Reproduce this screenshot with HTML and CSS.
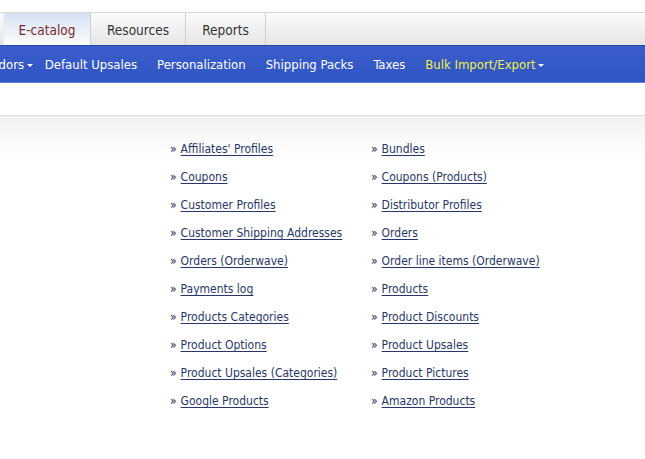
FILE: index.html
```html
<!DOCTYPE html>
<html>
<head>
<meta charset="utf-8">
<link rel="stylesheet" href="styles.css">
</head>
<body>
<div class="page">
  <div class="topspace"></div>
  <div class="tabs">
    <a class="tab active">E-catalog</a>
    <a class="tab">Resources</a>
    <a class="tab">Reports</a>
  </div>
  <div class="subnav">
    <div class="subnav-inner">
      <a class="item first">Vendors <span class="caret"></span></a>
      <a class="item">Default Upsales</a>
      <a class="item">Personalization</a>
      <a class="item">Shipping Packs</a>
      <a class="item">Taxes</a>
      <a class="item hl">Bulk Import/Export <span class="caret"></span></a>
    </div>
  </div>
  <div class="gap"></div>
  <div class="content">
    <ul class="links">
      <li><a>Affiliates' Profiles</a></li>
      <li><a>Bundles</a></li>
      <li><a>Coupons</a></li>
      <li><a>Coupons (Products)</a></li>
      <li><a>Customer Profiles</a></li>
      <li><a>Distributor Profiles</a></li>
      <li><a>Customer Shipping Addresses</a></li>
      <li><a>Orders</a></li>
      <li><a>Orders (Orderwave)</a></li>
      <li><a>Order line items (Orderwave)</a></li>
      <li><a>Payments log</a></li>
      <li><a>Products</a></li>
      <li><a>Products Categories</a></li>
      <li><a>Product Discounts</a></li>
      <li><a>Product Options</a></li>
      <li><a>Product Upsales</a></li>
      <li><a>Product Upsales (Categories)</a></li>
      <li><a>Product Pictures</a></li>
      <li><a>Google Products</a></li>
      <li><a>Amazon Products</a></li>
    </ul>
  </div>
</div>
</body>
</html>
```
FILE: styles.css
```css
html, body {
  margin: 0;
  padding: 0;
  background: #ffffff;
}
.page {
  width: 645px;
  height: 459px;
  overflow: hidden;
  font-family: "DejaVu Sans Condensed", "DejaVu Sans", sans-serif;
}
.topspace {
  height: 12px;
}
.tabs {
  display: flex;
  height: 32px;
  border-top: 1px solid #d9d9d9;
  background: linear-gradient(#fbfbfb, #e6e6e6);
  padding-left: 3px;
}
.tab {
  display: flex;
  align-items: center;
  justify-content: center;
  font-size: 13.5px;
  color: #333333;
  border-right: 1px solid #cfcfcf;
  padding-top: 1px;
}
.tab:nth-child(1) { width: 86px; }
.tab:nth-child(2) { width: 94px; }
.tab:nth-child(3) { width: 79px; }
.tab.active {
  color: #7a2c2c;
  background: linear-gradient(#d6e2f5, #f4f7fb 80%, #ffffff);
  border-left: 1px solid #e8eef8;
}
.subnav {
  height: 36px;
  border-top: 1px solid #2745ad;
  background: linear-gradient(#3a5dcb, #3154c4);
  overflow: hidden;
}
.subnav-inner {
  display: flex;
  align-items: center;
  height: 100%;
  margin-left: -33px;
}
.item {
  color: #ffffff;
  font-size: 13px;
  padding: 0 10px;
  white-space: nowrap;
}
.item.first {
  padding-right: 2px;
}
.item.hl {
  color: #f0f04a;
}
.caret {
  display: inline-block;
  width: 0;
  height: 0;
  border-left: 3px solid transparent;
  border-right: 3px solid transparent;
  border-top: 3px solid currentColor;
  vertical-align: middle;
  margin-left: -1px;
}
.item .caret { border-top-color: #ffffff; }
.gap {
  height: 32px;
  border-top: 1px solid #5f7fd6;
}
.content {
  border-top: 1px solid #dcdcdc;
  background: linear-gradient(#f2f2f2, #ffffff 40px);
  height: 400px;
  padding-top: 26px;
}
.links {
  list-style: none;
  margin: 0;
  padding: 0 0 0 170px;
  display: grid;
  grid-template-columns: 201px 201px;
  grid-auto-rows: 28px;
}
.links li {
  font-size: 12px;
  color: #1f2a50;
  white-space: nowrap;
}
.links li::before {
  content: "\00BB";
  margin-right: 4px;
}
.links a {
  color: #28376a;
  text-decoration: underline;
  text-underline-offset: 2px;
}
```
